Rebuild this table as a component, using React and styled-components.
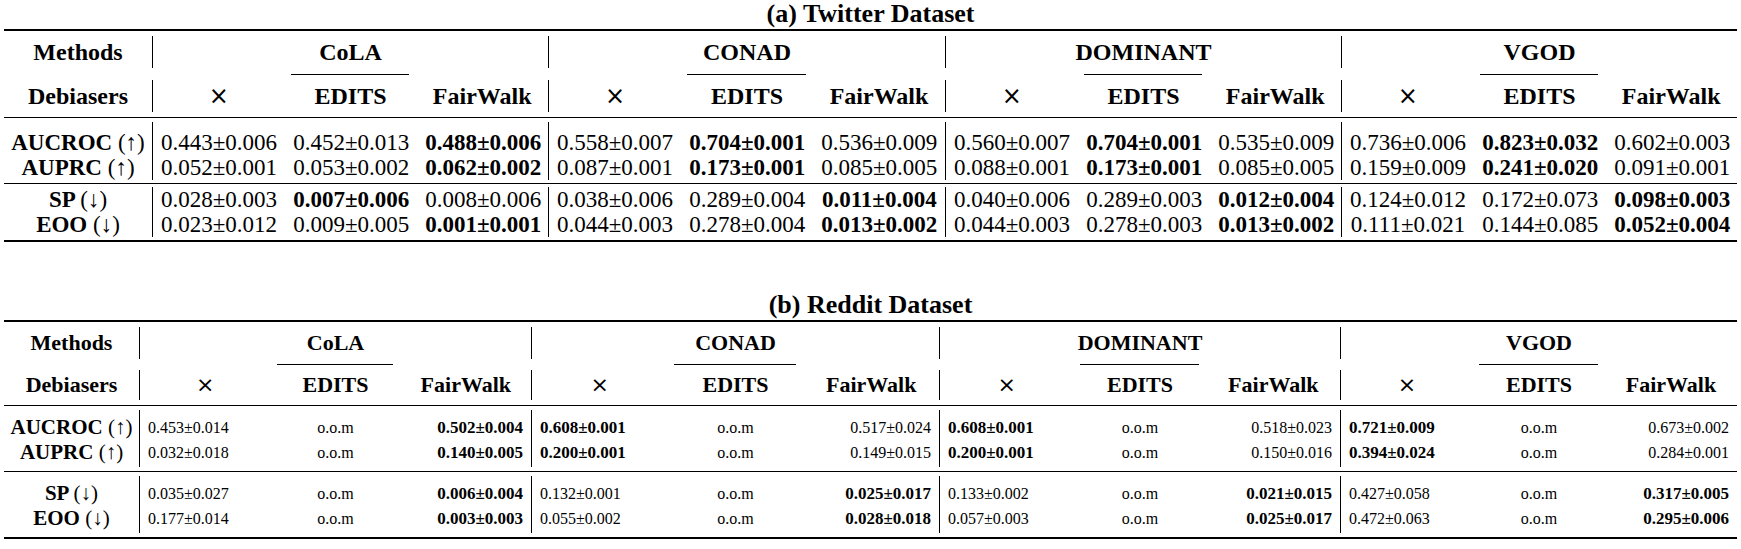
import React from "react";
import styled, { createGlobalStyle } from "styled-components";

const GlobalStyle = createGlobalStyle`
  html, body {
    margin: 0;
    padding: 0;
    background: #fff;
  }
  body {
    font-family: "Liberation Serif", "Times New Roman", serif;
    color: #000;
  }
`;

const METHODS = ["CoLA", "CONAD", "DOMINANT", "VGOD"];
const DEBIASERS = ["×", "EDITS", "FairWalk"];

// "*" marks a bold (best) value
const twitter = {
  title: "(a) Twitter Dataset",
  cols: "148px 396px 397px 396px 1fr",
  head: 24,
  label: 23,
  data: 23,
  bold: 23,
  captionH: 29,
  methodsH: 32,
  cmidH: 12,
  debH: 32,
  rowH: 25,
  gaps: [4, 3, 3],
  pads: [[8, 0], [0, 0]],
  align: ["center", "center", "center"],
  blocks: [
    [
      ["AUCROC", "↑", "0.443±0.006 0.452±0.013 *0.488±0.006 0.558±0.007 *0.704±0.001 0.536±0.009 0.560±0.007 *0.704±0.001 0.535±0.009 0.736±0.006 *0.823±0.032 0.602±0.003"],
      ["AUPRC", "↑", "0.052±0.001 0.053±0.002 *0.062±0.002 0.087±0.001 *0.173±0.001 0.085±0.005 0.088±0.001 *0.173±0.001 0.085±0.005 0.159±0.009 *0.241±0.020 0.091±0.001"],
    ],
    [
      ["SP", "↓", "0.028±0.003 *0.007±0.006 0.008±0.006 0.038±0.006 0.289±0.004 *0.011±0.004 0.040±0.006 0.289±0.003 *0.012±0.004 0.124±0.012 0.172±0.073 *0.098±0.003"],
      ["EOO", "↓", "0.023±0.012 0.009±0.005 *0.001±0.001 0.044±0.003 0.278±0.004 *0.013±0.002 0.044±0.003 0.278±0.003 *0.013±0.002 0.111±0.021 0.144±0.085 *0.052±0.004"],
    ],
  ],
};

const reddit = {
  title: "(b) Reddit Dataset",
  cols: "135px 392px 408px 401px 1fr",
  head: 22,
  label: 21,
  data: 16,
  bold: 17,
  captionH: 29,
  methodsH: 32,
  cmidH: 11,
  debH: 30,
  rowH: 25,
  gaps: [4, 4, 4],
  pads: [[5, 2], [5, 2]],
  align: ["start", "center", "end"],
  blocks: [
    [
      ["AUCROC", "↑", "0.453±0.014 o.o.m *0.502±0.004 *0.608±0.001 o.o.m 0.517±0.024 *0.608±0.001 o.o.m 0.518±0.023 *0.721±0.009 o.o.m 0.673±0.002"],
      ["AUPRC", "↑", "0.032±0.018 o.o.m *0.140±0.005 *0.200±0.001 o.o.m 0.149±0.015 *0.200±0.001 o.o.m 0.150±0.016 *0.394±0.024 o.o.m 0.284±0.001"],
    ],
    [
      ["SP", "↓", "0.035±0.027 o.o.m *0.006±0.004 0.132±0.001 o.o.m *0.025±0.017 0.133±0.002 o.o.m *0.021±0.015 0.427±0.058 o.o.m *0.317±0.005"],
      ["EOO", "↓", "0.177±0.014 o.o.m *0.003±0.003 0.055±0.002 o.o.m *0.028±0.018 0.057±0.003 o.o.m *0.025±0.017 0.472±0.063 o.o.m *0.295±0.006"],
    ],
  ],
};

const Page = styled.div`
  width: 1741px;
  height: 549px;
  box-sizing: border-box;
  padding: 0 4px;
  display: flex;
  flex-direction: column;
  gap: ${(p) => p.$gap}px;
  overflow: hidden;
  font-family: "Liberation Serif", "Times New Roman", serif;
`;

const Table = styled.section`
  display: flex;
  flex-direction: column;
`;

const Caption = styled.div`
  height: ${(p) => p.$h}px;
  line-height: ${(p) => p.$h - 2}px;
  text-align: center;
  font-weight: 700;
  font-size: 26px;
`;

const Rule = styled.div`
  height: ${(p) => (p.$heavy ? 2 : 1)}px;
  background: #000;
  margin: ${(p) => p.$top}px 0 ${(p) => p.$bottom}px;
`;

const Band = styled.div`
  display: grid;
  grid-template-columns: ${(p) => p.$cols};
`;

const LabelStack = styled.div`
  display: flex;
  flex-direction: column;
  align-items: center;
  padding: ${(p) => p.$pt}px 0 ${(p) => p.$pb}px;
`;

const Label = styled.div`
  height: ${(p) => p.$h}px;
  line-height: ${(p) => p.$h}px;
  font-size: ${(p) => p.$size}px;
  font-weight: 700;
  text-align: center;
  white-space: nowrap;
`;

const Arrow = styled.span`
  font-weight: 400;
`;

const Group = styled.div`
  display: grid;
  grid-template-columns: repeat(3, 1fr);
  grid-auto-rows: ${(p) => p.$h}px;
  padding: ${(p) => p.$pt || 0}px 0 ${(p) => p.$pb || 0}px;
  border-left: ${(p) => (p.$line ? "1px solid #000" : "none")};
`;

const GroupTitle = styled.div`
  grid-column: 1 / -1;
  text-align: center;
  font-weight: 700;
  font-size: ${(p) => p.$size}px;
  line-height: ${(p) => p.$h}px;
`;

const HeadCell = styled.div`
  text-align: center;
  font-size: ${(p) => p.$size}px;
  font-weight: ${(p) => (p.$times ? 400 : 700)};
  font-family: ${(p) =>
    p.$times ? '"DejaVu Sans", sans-serif' : "inherit"};
  line-height: ${(p) => p.$h}px;
`;

const CMid = styled.div`
  grid-column: 2;
  align-self: center;
  height: 1px;
  margin: 0 7px;
  background: #000;
`;

const Value = styled.div`
  justify-self: ${(p) => p.$align};
  padding: 0 8px;
  font-size: ${(p) => (p.$bold ? p.$boldSize : p.$size)}px;
  font-weight: ${(p) => (p.$bold ? 700 : 400)};
  line-height: ${(p) => p.$h}px;
  white-space: nowrap;
`;

function DataBlock({ t, rows, pads }) {
  const [pt, pb] = pads;
  const values = rows.map((r) => r[2].split(" "));
  return (
    <Band $cols={t.cols}>
      <LabelStack $pt={pt} $pb={pb}>
        {rows.map(([name, arrow]) => (
          <Label key={name} $h={t.rowH} $size={t.label}>
            {name} <Arrow>({arrow})</Arrow>
          </Label>
        ))}
      </LabelStack>
      {METHODS.map((m, g) => (
        <Group key={m} $line $h={t.rowH} $pt={pt} $pb={pb}>
          {values.map((vals, r) =>
            vals.slice(g * 3, g * 3 + 3).map((v, c) => {
              const bold = v.startsWith("*");
              return (
                <Value
                  key={`${r}-${c}`}
                  $bold={bold}
                  $size={t.data}
                  $boldSize={t.bold}
                  $h={t.rowH}
                  $align={t.align[c]}
                >
                  {bold ? v.slice(1) : v}
                </Value>
              );
            })
          )}
        </Group>
      ))}
    </Band>
  );
}

function ResultTable({ t }) {
  const [g1, g2, g3] = t.gaps;
  return (
    <Table>
      <Caption $h={t.captionH}>{t.title}</Caption>
      <Rule $heavy $top={0} $bottom={5} />
      <Band $cols={t.cols}>
        <Label $h={t.methodsH} $size={t.head}>Methods</Label>
        {METHODS.map((m) => (
          <Group key={m} $line $h={t.methodsH}>
            <GroupTitle $size={t.head} $h={t.methodsH}>{m}</GroupTitle>
          </Group>
        ))}
      </Band>
      <Band $cols={t.cols}>
        <div />
        {METHODS.map((m) => (
          <Group key={m} $h={t.cmidH}>
            <CMid />
          </Group>
        ))}
      </Band>
      <Band $cols={t.cols}>
        <Label $h={t.debH} $size={t.head}>Debiasers</Label>
        {METHODS.map((m) => (
          <Group key={m} $line $h={t.debH}>
            {DEBIASERS.map((d) => (
              <HeadCell key={d} $times={d === "×"} $size={t.head} $h={t.debH}>
                {d}
              </HeadCell>
            ))}
          </Group>
        ))}
      </Band>
      <Rule $top={5} $bottom={g1} />
      <DataBlock t={t} rows={t.blocks[0]} pads={t.pads[0]} />
      <Rule $top={g2} $bottom={g2} />
      <DataBlock t={t} rows={t.blocks[1]} pads={t.pads[1]} />
      <Rule $heavy $top={g3} $bottom={0} />
    </Table>
  );
}

export default function App() {
  return (
    <>
      <GlobalStyle />
      <Page $gap={49}>
        <ResultTable t={twitter} />
        <ResultTable t={reddit} />
      </Page>
    </>
  );
}
